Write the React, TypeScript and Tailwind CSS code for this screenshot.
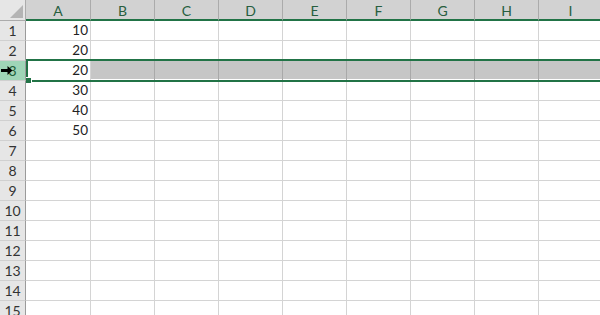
import React from 'react';

const columns = ['A', 'B', 'C', 'D', 'E', 'F', 'G', 'H', 'I'];
const values: Record<number, number> = { 1: 10, 2: 20, 3: 20, 4: 30, 5: 40, 6: 50 };
const rows = Array.from({ length: 15 }, (_, i) => i + 1);
const selectedRow = 3;

const colWidth = (c: string) => (c === 'A' ? 'w-[65px]' : 'w-[64px]');

const App: React.FC = () => {
  return (
    <div className="relative w-[600px] h-[315px] overflow-hidden bg-white font-['Lato','Liberation_Sans',sans-serif] text-[13.5px] text-[#222]">
      {/* Column headers */}
      <div className="flex h-[21px]">
        <div className="relative w-[26px] shrink-0 bg-[#e6e6e6] border-r border-b border-[#ababab]">
          <svg className="absolute left-[10px] top-[5px]" width="13" height="13" viewBox="0 0 13 13">
            <polygon points="13,0 13,13 0,13" fill="#b4b4b4" />
          </svg>
        </div>
        {columns.map((c) => (
          <div
            key={c}
            className={`${colWidth(c)} shrink-0 flex items-center justify-center pt-[1px] bg-[#d2d2d2] border-r border-[#ababab] border-b-2 border-b-[#217346] text-[#275e3e] text-[14px]`}
          >
            {c}
          </div>
        ))}
      </div>

      {/* Rows */}
      {rows.map((r) => {
        const sel = r === selectedRow;
        return (
          <div key={r} className="flex h-[20px]">
            <div
              className={`w-[26px] shrink-0 flex items-center justify-center border-r border-r-[#9b9b9b] border-b border-b-[#d0d0d0] text-[14px] ${
                sel ? 'bg-[#9fd5b7] text-[#1e5e3a]' : 'bg-[#e6e6e6] text-[#333]'
              }`}
            >
              {r}
            </div>
            {columns.map((c) => {
              const grey = sel && c !== 'A';
              return (
                <div
                  key={c}
                  className={`${colWidth(c)} shrink-0 flex items-center justify-end pr-[2px] border-r border-b ${
                    grey
                      ? 'bg-[#c6c6c6] border-r-[#a9a9a9] border-b-[#d4d4d4] shadow-[inset_0_-1px_0_white]'
                      : 'border-[#d4d4d4]'
                  }`}
                >
                  {c === 'A' && values[r] !== undefined ? values[r] : ''}
                </div>
              );
            })}
          </div>
        );
      })}

      {/* Selection border for row 3 */}
      <div className="absolute left-[26px] right-0 top-[59px] h-[23px] border-t-2 border-l-2 border-b-2 border-[#217346]" />
      <div className="absolute left-[26px] top-[77px] w-[6px] h-[6px] bg-[#217346] border-r border-t border-white" />

      {/* Mouse pointer on row header */}
      <svg className="absolute left-[1px] top-[66px]" width="12" height="9" viewBox="0 0 12 9">
        <path d="M0 3 H6.5 V0 L11.5 4.5 L6.5 9 V6 H0 Z" fill="#000" />
      </svg>
    </div>
  );
};

export default App;
